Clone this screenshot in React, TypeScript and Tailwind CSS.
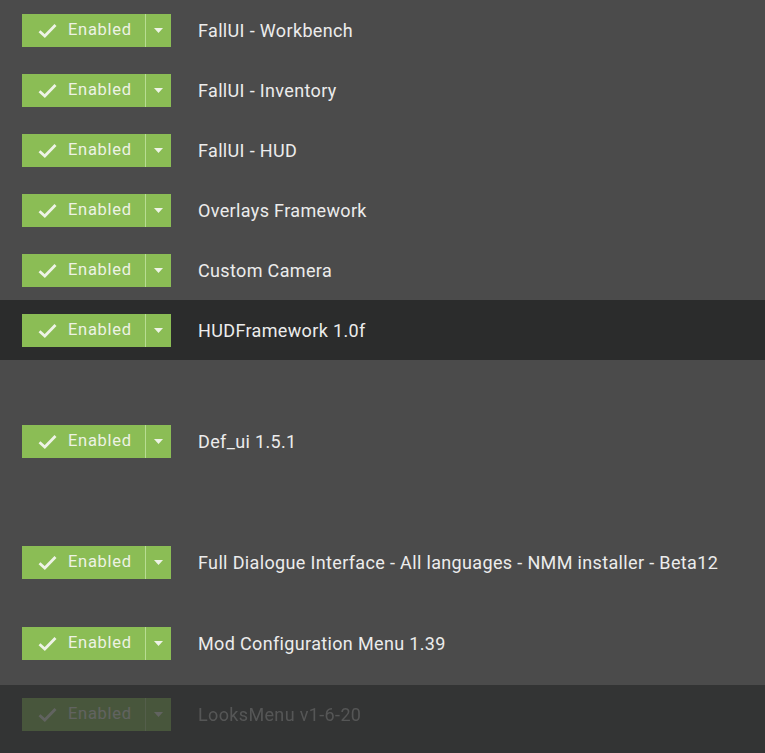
const mods: { name: string; h: string; variant?: "selected" | "disabled" }[] = [
  { name: "FallUI - Workbench", h: "h-[60px]" },
  { name: "FallUI - Inventory", h: "h-[60px]" },
  { name: "FallUI - HUD", h: "h-[60px]" },
  { name: "Overlays Framework", h: "h-[60px]" },
  { name: "Custom Camera", h: "h-[60px]" },
  { name: "HUDFramework 1.0f", h: "h-[60px]", variant: "selected" },
  { name: "Def_ui 1.5.1", h: "h-[162px]" },
  { name: "Full Dialogue Interface - All languages - NMM installer - Beta12", h: "h-[80px]" },
  { name: "Mod Configuration Menu 1.39", h: "h-[83px]" },
  { name: "LooksMenu v1-6-20", h: "h-[68px]", variant: "disabled" },
];

function Check() {
  return (
    <svg width="19" height="15" viewBox="0 0 19 15" className="shrink-0">
      <path d="M1.5 8.2 L6.8 13 L17.5 2" fill="none" stroke="#eef3e6" strokeWidth="2.8" strokeLinejoin="miter" />
    </svg>
  );
}

function StatusButton() {
  return (
    <div className="flex h-[33px] w-[149px] shrink-0 bg-[#8bbd55] text-[#edf2e4]">
      <div className="flex w-[123px] items-center gap-[11px] pl-[16px]">
        <Check />
        <span className="text-[16.5px] leading-none tracking-[0.7px]">Enabled</span>
      </div>
      <div className="w-px bg-[#b8dc92]" />
      <div className="flex flex-1 items-center justify-center">
        <svg width="9" height="5" viewBox="0 0 9 5">
          <path d="M0 0 H9 L4.5 5 Z" fill="#eef3e6" />
        </svg>
      </div>
    </div>
  );
}

export default function App() {
  return (
    <div className="h-[753px] w-[765px] overflow-hidden bg-[#4b4b4b] font-['Roboto',sans-serif]">
      {mods.map((m) => (
        <div
          key={m.name}
          className={`flex items-center pl-[22px] ${m.h} ${
            m.variant === "selected" ? "bg-[#2b2c2c]" : m.variant === "disabled" ? "bg-[#333434] items-start pt-[13px]" : ""
          }`}
        >
          <div className={`flex items-center ${m.variant === "disabled" ? "opacity-25" : ""}`}>
            <StatusButton />
            <span className={`ml-[27px] whitespace-nowrap text-[18px] tracking-[0.35px] ${m.variant === "disabled" ? "text-[#bdbdbd]" : "text-[#ececec]"}`}>
              {m.name}
            </span>
          </div>
        </div>
      ))}
    </div>
  );
}
